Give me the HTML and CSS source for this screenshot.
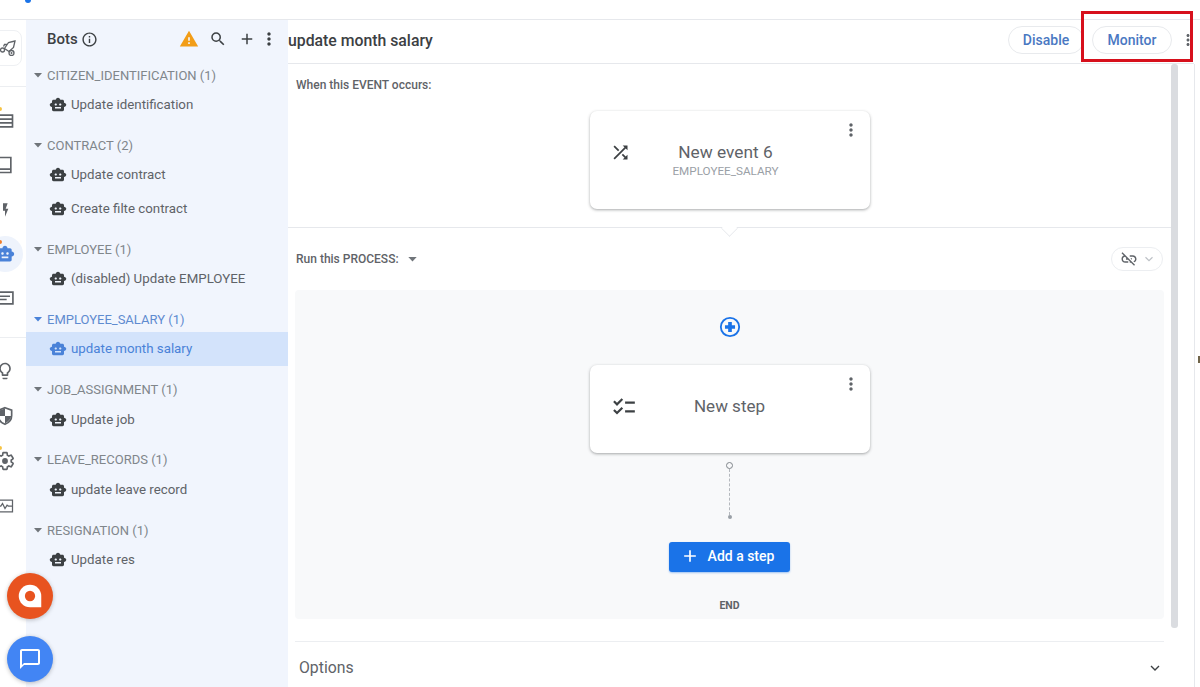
FILE: index.html
```html
<!DOCTYPE html>
<html lang="en">
<head>
<meta charset="utf-8">
<title>Bots</title>
<link rel="stylesheet" href="styles.css">
</head>
<body>
<svg class="defs" width="0" height="0">
  <symbol id="robot" viewBox="0 0 24 24"><path d="M20 9V7c0-1.1-.9-2-2-2h-3c0-1.66-1.34-3-3-3S9 3.34 9 5H6c-1.1 0-2 .9-2 2v2c-1.66 0-3 1.34-3 3s1.34 3 3 3v4c0 1.1.9 2 2 2h12c1.1 0 2-.9 2-2v-4c1.66 0 3-1.34 3-3s-1.34-3-3-3zM7.5 11.5c0-.83.67-1.5 1.5-1.5s1.5.67 1.5 1.5S9.83 13 9 13s-1.5-.67-1.5-1.5zM16 17H8v-2h8v2zm-1-4c-.83 0-1.5-.67-1.5-1.5S14.17 10 15 10s1.5.67 1.5 1.5S15.83 13 15 13z"/></symbol>
  <symbol id="robot-wide" viewBox="0 1 24 21" preserveAspectRatio="none"><path d="M20 9V7c0-1.1-.9-2-2-2h-3c0-1.66-1.34-3-3-3S9 3.34 9 5H6c-1.1 0-2 .9-2 2v2c-1.66 0-3 1.34-3 3s1.34 3 3 3v4c0 1.1.9 2 2 2h12c1.1 0 2-.9 2-2v-4c1.66 0 3-1.34 3-3s-1.34-3-3-3zM7.5 11.5c0-.83.67-1.5 1.5-1.5s1.5.67 1.5 1.5S9.83 13 9 13s-1.5-.67-1.5-1.5zM16 17H8v-2h8v2zm-1-4c-.83 0-1.5-.67-1.5-1.5S14.17 10 15 10s1.5.67 1.5 1.5S15.83 13 15 13z"/></symbol>
  <symbol id="more" viewBox="0 0 24 24"><path d="M12 8c1.1 0 2-.9 2-2s-.9-2-2-2-2 .9-2 2 .9 2 2 2zm0 2c-1.1 0-2 .9-2 2s.9 2 2 2 2-.9 2-2-.9-2-2-2zm0 6c-1.1 0-2 .9-2 2s.9 2 2 2 2-.9 2-2-.9-2-2-2z"/></symbol>
  <symbol id="caret" viewBox="0 0 10 6"><path d="M0 0h10L5 5.5z"/></symbol>
</svg>

<div class="topstrip"><span class="topmark"></span></div>

<div class="app">
  <nav class="rail">
    <div class="rail-logo">
      <svg class="ic-rocket" viewBox="0 0 16 16"><path d="M15 1L8.500 2.500 4.500 8.500 9 11.500 13.500 7.500z" class="ln rk"/><path d="M7 4.500H4.500L3.500 6.500" class="ln rk"/><circle cx="2.500" cy="10" r="2" class="ln rk"/><circle cx="11.500" cy="13" r="2.500" class="ln rk"/><circle cx="11.500" cy="13" r="1"/></svg>
    </div>
    <hr class="rail-rule first">
    <div class="rail-group one">
      <div class="slot"><span class="dot amber"></span><svg viewBox="0 0 24 24" class="ic"><path d="M3 5h18v14H3zM3 9.700h18M3 14.300h18" class="ln"/></svg></div>
      <div class="slot"><svg viewBox="0 0 24 24" class="ic"><path d="M3 3h16v18H3zM3 17h16" class="ln"/></svg></div>
      <div class="slot"><svg viewBox="0 0 24 24" class="ic small"><path d="M9 2v11h3v9l5-12h-4l3-8z"/></svg></div>
      <div class="slot active"><span class="halo"></span><span class="dot orange"></span><svg viewBox="0 0 24 24" class="ic blue"><use href="#robot"/></svg></div>
      <div class="slot"><svg viewBox="0 0 24 24" class="ic"><path d="M2.500 5h19v14h-19z" class="ln"/><path d="M6 9h12v1.800H6zM6 13h8v1.800H6z"/></svg></div>
    </div>
    <hr class="rail-rule second">
    <div class="rail-group two">
      <div class="slot"><svg viewBox="0 0 24 24" class="ic"><path d="M9 21c0 .55.45 1 1 1h4c.55 0 1-.45 1-1v-1H9v1zm3-19C8.140 2 5 5.140 5 9c0 2.380 1.190 4.470 3 5.740V17c0 .55.45 1 1 1h6c.55 0 1-.45 1-1v-2.260c1.810-1.270 3-3.360 3-5.740 0-3.860-3.140-7-7-7zm2.850 11.100l-.85.6V16h-4v-2.300l-.85-.6C7.800 12.160 7 10.630 7 9c0-2.760 2.240-5 5-5s5 2.240 5 5c0 1.630-.8 3.160-2.150 4.100z"/></svg></div>
      <div class="slot"><svg viewBox="0 0 24 24" class="ic"><path d="M12 2l8 3v6.500c0 5-3.300 8.800-8 10.500-4.700-1.700-8-5.500-8-10.500V5z" class="ln"/><path d="M12 3v9H4.500V5.500zM12 12h7.500c-.5 4-3.500 7-7.500 9z"/></svg></div>
      <div class="slot"><span class="dot amber"></span><svg viewBox="0 0 24 24" class="ic"><path class="ln" d="M19.430 12.980c.04-.32.07-.64.07-.98s-.03-.66-.07-.98l2.110-1.650c.19-.15.24-.42.12-.64l-2-3.460c-.12-.22-.39-.3-.61-.22l-2.490 1c-.52-.4-1.080-.73-1.690-.98l-.38-2.650C14.460 2.180 14.250 2 14 2h-4c-.25 0-.46.18-.49.42l-.38 2.650c-.61.25-1.170.59-1.690.98l-2.490-1c-.23-.09-.49 0-.61.22l-2 3.460c-.13.22-.07.49.12.64l2.110 1.650c-.04.32-.07.65-.07.98s.03.66.07.98l-2.110 1.650c-.19.15-.24.42-.12.64l2 3.460c.12.22.39.3.61.22l2.490-1c.52.4 1.080.73 1.690.98l.38 2.650c.03.24.24.42.49.42h4c.25 0 .46-.18.49-.42l.38-2.650c.61-.25 1.170-.59 1.690-.98l2.490 1c.23.09.49 0 .61-.22l2-3.460c.12-.22.07-.49-.12-.64l-2.110-1.650z"/><circle cx="12" cy="12" r="3.500"/></svg></div>
      <div class="slot"><svg viewBox="0 0 24 24" class="ic"><path d="M3 5h18v14H3z" class="ln thin"/><path d="M3 12h4l2-3 3 6 2.500-4 1.500 1h5" class="ln thin"/></svg></div>
    </div>
  </nav>

  <aside class="sidebar">
    <div class="side-head">
      <div class="side-title"><span>Bots</span><svg viewBox="0 0 24 24" class="info"><path d="M11 7h2v2h-2zm0 4h2v6h-2zm1-9C6.480 2 2 6.480 2 12s4.480 10 10 10 10-4.480 10-10S17.520 2 12 2zm0 18c-4.410 0-8-3.590-8-8s3.590-8 8-8 8 3.590 8 8-3.590 8-8 8z"/></svg></div>
      <div class="side-tools">
        <svg viewBox="0 0 24 24" class="warn"><path d="M1 21h22L12 2 1 21zm12-3h-2v-2h2v2zm0-4h-2v-4h2v4z"/></svg>
        <svg viewBox="0 0 24 24" class="tool"><path d="M15.500 14h-.79l-.28-.27A6.471 6.471 0 0 0 16 9.500 6.500 6.500 0 1 0 9.500 16c1.610 0 3.090-.59 4.230-1.570l.27.28v.79l5 4.990L20.490 19l-4.990-5zm-6 0C7.010 14 5 11.990 5 9.500S7.010 5 9.500 5 14 7.010 14 9.500 11.990 14 9.500 14z"/></svg>
        <svg viewBox="0 0 24 24" class="tool"><path d="M19 13h-6v6h-2v-6H5v-2h6V5h2v6h6v2z"/></svg>
        <svg class="tool kebab"><use href="#more"/></svg>
      </div>
    </div>

    <section class="group">
      <h3 class="group-head"><svg class="caret"><use href="#caret"/></svg>CITIZEN_IDENTIFICATION (1)</h3>
      <div class="bot"><svg class="bot-ic"><use href="#robot-wide"/></svg>Update identification</div>
    </section>
    <section class="group">
      <h3 class="group-head"><svg class="caret"><use href="#caret"/></svg>CONTRACT (2)</h3>
      <div class="bot"><svg class="bot-ic"><use href="#robot-wide"/></svg>Update contract</div>
      <div class="bot"><svg class="bot-ic"><use href="#robot-wide"/></svg>Create filte contract</div>
    </section>
    <section class="group">
      <h3 class="group-head"><svg class="caret"><use href="#caret"/></svg>EMPLOYEE (1)</h3>
      <div class="bot"><svg class="bot-ic"><use href="#robot-wide"/></svg>(disabled) Update EMPLOYEE</div>
    </section>
    <section class="group current">
      <h3 class="group-head"><svg class="caret"><use href="#caret"/></svg>EMPLOYEE_SALARY (1)</h3>
      <div class="bot selected"><svg class="bot-ic"><use href="#robot-wide"/></svg>update month salary</div>
    </section>
    <section class="group">
      <h3 class="group-head"><svg class="caret"><use href="#caret"/></svg>JOB_ASSIGNMENT (1)</h3>
      <div class="bot"><svg class="bot-ic"><use href="#robot-wide"/></svg>Update job</div>
    </section>
    <section class="group">
      <h3 class="group-head"><svg class="caret"><use href="#caret"/></svg>LEAVE_RECORDS (1)</h3>
      <div class="bot"><svg class="bot-ic"><use href="#robot-wide"/></svg>update leave record</div>
    </section>
    <section class="group">
      <h3 class="group-head"><svg class="caret"><use href="#caret"/></svg>RESIGNATION (1)</h3>
      <div class="bot"><svg class="bot-ic"><use href="#robot-wide"/></svg>Update res</div>
    </section>
  </aside>

  <main class="main">
    <header class="main-head">
      <h1 class="main-title">update month salary</h1>
      <div class="main-actions">
        <button class="pill disable">Disable</button>
        <button class="pill monitor">Monitor</button>
        <svg class="head-more"><use href="#more"/></svg>
      </div>
    </header>
    <div class="main-body">
      <div class="content">
        <p class="label when">When this EVENT occurs:</p>
        <div class="card event">
          <svg viewBox="0 0 24 24" class="card-ic"><path d="M10.590 9.170L5.410 4 4 5.410l5.170 5.170 1.420-1.410zM14.500 4l2.040 2.040L4 18.590 5.410 20 17.960 7.460 20 9.500V4h-5.500zm.33 9.410l-1.410 1.410 3.130 3.130L14.500 20H20v-5.500l-2.040 2.040-3.130-3.130z"/></svg>
          <div class="card-text">
            <div class="card-title">New event 6</div>
            <div class="card-sub">EMPLOYEE_SALARY</div>
          </div>
          <svg class="card-more"><use href="#more"/></svg>
        </div>
        <div class="split"></div>
        <div class="process-row">
          <span class="label">Run this PROCESS:</span>
          <svg class="process-caret"><use href="#caret"/></svg>
          <div class="link-pill">
            <svg viewBox="0 0 24 24" class="link-ic"><path d="M17 7h-4v1.900h4c1.710 0 3.100 1.390 3.100 3.100 0 1.430-.98 2.630-2.310 2.980l1.460 1.460C20.880 15.610 22 13.950 22 12c0-2.760-2.240-5-5-5zm-1 4h-2.190l2 2H16zM2 4.270l3.110 3.110C3.290 8.120 2 9.910 2 12c0 2.760 2.240 5 5 5h4v-1.900H7c-1.710 0-3.100-1.390-3.100-3.100 0-1.590 1.210-2.900 2.760-3.070L8.730 11H8v2h2.730L13 15.270V17h1.730l4.010 4L20 19.740 3.270 3 2 4.270z"/></svg>
            <svg viewBox="0 0 24 24" class="link-chev"><path d="M6 9l6 6 6-6"/></svg>
          </div>
        </div>
        <div class="panel">
          <svg viewBox="0 0 24 24" class="add-circle"><circle cx="12" cy="12" r="10"/><path d="M12 6.500v11M6.500 12h11"/></svg>
          <div class="card step">
            <svg viewBox="0 0 24 24" class="card-ic check"><path d="M22 7h-9v2h9V7zm0 8h-9v2h9v-2zM5.540 11L2 7.460l1.410-1.410 2.120 2.120 4.240-4.240 1.410 1.410L5.540 11zm0 8L2 15.460l1.410-1.410 2.120 2.120 4.240-4.240 1.410 1.410L5.540 19z"/></svg>
            <div class="card-text"><div class="card-title">New step</div></div>
            <svg class="card-more"><use href="#more"/></svg>
          </div>
          <div class="connector"><span class="ring"></span><span class="dash"></span><span class="end-dot"></span></div>
          <button class="add-step"><svg viewBox="0 0 24 24"><path d="M19 13h-6v6h-2v-6H5v-2h6V5h2v6h6v2z"/></svg>Add a step</button>
          <div class="end">END</div>
        </div>
        <div class="options"><span>Options</span><svg viewBox="0 0 24 24"><path d="M6 9l6 6 6-6"/></svg></div>
      </div>
      <div class="scrollbar"></div>
    </div>
  </main>
</div>

<div class="red-box"></div>
<span class="edge-mark"></span>
<button class="fab orange-fab"><svg viewBox="0 0 32 32"><path d="M16 4a12 12 0 1 0 0 24h12V16A12 12 0 0 0 16 4z" class="fab-shape"/><circle cx="16" cy="16" r="5.500" class="fab-core"/></svg></button>
<button class="fab blue-fab"><svg viewBox="0 0 24 24"><path d="M20 2H4c-1.100 0-2 .9-2 2v18l4-4h14c1.100 0 2-.9 2-2V4c0-1.100-.9-2-2-2zm0 14H6l-2 2V4h16v12z"/></svg></button>
</body>
</html>
```
FILE: styles.css
```css
* { box-sizing: border-box; }
html, body { margin: 0; height: 687px; overflow: hidden; background: #fff; }
body { font-family: Roboto, "Liberation Sans", sans-serif; color: #3c4043; position: relative; }
.defs { display: block; height: 0; }
svg { display: block; flex: none; }

.topstrip { height: 20px; background: #fff; border-bottom: 1px solid #e6e8ec; }
.topmark { display: block; width: 6px; height: 3px; margin-left: 25px; background: #1a73e8; border-radius: 0 0 3px 3px; }

.app { display: grid; grid-template-columns: 26px 262px 1fr; height: 667px; }

/* rail */
.rail { overflow: hidden; background: #fff; }
.rail-logo { width: 36px; height: 36px; margin: 10px 0 0 -14px; border: 1px solid #eef0f3; border-radius: 8px; display: flex; align-items: center; justify-content: flex-end; padding-right: 5px; }
.ic-rocket { width: 16px; height: 16px; fill: #5f6368; }
.ln { fill: none; stroke: #5f6368; stroke-width: 2; }
.ln.thin { stroke-width: 1.500; }
.ln.rk { stroke-width: 1.300; }
.rail-rule { border: 0; border-top: 1px solid #eceef1; margin: 0; }
.rail-rule.first { margin-top: 20px; }
.rail-rule.second { margin-top: 17px; }
.rail-group { padding-top: 12px; }
.rail-group.two { padding-top: 10px; }
.slot { position: relative; height: 44.250px; display: flex; align-items: center; }
.rail-group.two .slot { height: 45px; }
.ic { width: 20px; height: 20px; margin-left: -5px; fill: #5f6368; position: relative; }
.ic.small { width: 16px; height: 16px; margin-left: -3px; }
.ic.blue { fill: #4a82d8; }
.halo { position: absolute; left: -13px; top: 4px; width: 36px; height: 36px; border-radius: 50%; background: #eef3fc; }
.dot { position: absolute; left: -2px; top: 8px; width: 4px; height: 4px; border-radius: 50%; z-index: 1; }
.dot.amber { background: #f6c344; }
.dot.orange { background: #ef7d2a; }

/* sidebar */
.sidebar { background: #f1f5fd; }
.side-head { height: 43px; display: flex; align-items: center; justify-content: space-between; padding: 0 10px 5px 21px; }
.side-title { display: flex; align-items: center; gap: 3px; font-size: 15px; font-weight: 500; color: #3c4043; }
.info { width: 17px; height: 17px; fill: #3c4043; }
.side-tools { display: flex; align-items: center; }
.warn { width: 20px; height: 20px; fill: #f29d17; margin-right: 10px; }
.tool { width: 18px; height: 18px; fill: #3c4043; margin-right: 11px; }
.tool.kebab { width: 20px; height: 20px; margin: 0 -1px 0 -8px; }

.group { margin-bottom: 11.700px; }
.group-head { margin: 0; height: 25px; display: flex; align-items: center; padding-left: 8px; font-size: 13px; font-weight: 400; color: #80868b; }
.caret { width: 8px; height: 5px; margin-right: 5px; fill: #70757a; }
.bot { height: 33.500px; display: flex; align-items: center; padding-left: 23px; font-size: 13.300px; color: #5f6368; }
.bot-ic { width: 18px; height: 15px; margin-right: 4px; fill: #3c4043; }
.current .group-head { color: #5f8bd0; }
.current .caret { fill: #4a82d8; }
.bot.selected { background: #d3e3fb; color: #4a82d8; }
.bot.selected .bot-ic { fill: #4a82d8; }

/* main */
.main { display: flex; flex-direction: column; min-width: 0; }
.main-head { height: 44px; flex: none; display: flex; align-items: center; justify-content: space-between; border-bottom: 1px solid #e6e8ec; margin-right: 6px; padding-bottom: 3px; }
.main-title { margin: 0; font-size: 15.800px; font-weight: 500; color: #3c4043; }
.main-actions { display: flex; align-items: center; }
.pill { height: 28px; border: 1px solid #e8eaed; border-radius: 14px; background: #fff; font: 500 14px Roboto, sans-serif; color: #4a78c2; padding: 0; }
.pill.disable { width: 76px; margin-right: 8px; }
.pill.monitor { width: 80px; }
.head-more { width: 18px; height: 18px; fill: #5f6368; margin: 0 -3px 0 7px; }
.main-body { flex: 1; display: flex; min-height: 0; margin-right: 5px; border-right: 1px solid #e6e8ec; padding-right: 16px; overflow: hidden; }
.content { flex: 1; min-width: 0; padding: 0 7px; }
.scrollbar { width: 7px; height: 564px; flex: none; background: #dadce0; border-radius: 3px; }

.label { font-size: 12px; font-weight: 500; color: #5f6368; margin: 0; line-height: 14px; padding-left: 1px; }
.when { margin-top: 14px; }

.card { position: relative; margin: 0 auto; width: 280px; background: #fff; border-radius: 7px; box-shadow: 0 1px 3px rgba(60,64,67,.45); display: flex; }
.card.event { height: 98px; margin-top: 19px; }
.card.step { height: 88px; margin-top: 27px; }
.card-ic { width: 21px; height: 21px; margin: 31px 0 0 20px; fill: #3c4043; }
.card-ic.check { width: 26px; height: 26px; margin: 29px 0 0 21px; }
.card-text { position: absolute; left: 0; right: 8px; text-align: center; top: 31px; }
.step .card-text { right: 0; }
.card-title { font-size: 17.300px; line-height: 20px; color: #5f6368; }
.step .card-title { font-size: 17px; }
.card-sub { font-size: 11.700px; line-height: 14px; margin-top: 2px; color: #9aa0a6; }
.card-more { position: absolute; right: 9px; top: 9px; width: 20px; height: 20px; fill: #5f6368; }

.split { position: relative; height: 1px; margin: 18px -7px 0; background: #e6e8ec; }
.split::after { content: ""; position: absolute; left: 434px; top: -6px; width: 14px; height: 14px; background: #fff; border-right: 1px solid #e6e8ec; border-bottom: 1px solid #e6e8ec; transform: rotate(45deg) scale(.78); }

.process-row { display: flex; align-items: center; height: 24px; margin-top: 19px; }
.process-caret { width: 9px; height: 5px; margin-left: 9px; fill: #70757a; }
.link-pill { margin-left: auto; width: 52px; height: 24px; border: 1px solid #eceef1; border-radius: 12px; display: flex; align-items: center; padding-left: 8px; margin-right: 1px; }
.link-ic { width: 18px; height: 18px; fill: #5f6368; }
.link-chev { width: 14px; height: 14px; margin-left: 4px; fill: none; stroke: #bdc1c6; stroke-width: 2; }

.panel { margin-top: 19px; height: 329px; background: #f8f9fa; border-radius: 4px; padding-top: 26px; display: flex; flex-direction: column; align-items: center; }
.add-circle { width: 22px; height: 22px; fill: none; stroke: #1a73e8; stroke-width: 2; }
.add-circle path { stroke-width: 4; }
.connector { display: flex; flex-direction: column; align-items: center; margin-top: 9px; height: 57px; }
.ring { width: 7px; height: 7px; border: 1px solid #80868b; border-radius: 50%; flex: none; }
.dash { flex: 1; width: 0; border-left: 1px dashed #b4b8bd; }
.end-dot { width: 4px; height: 4px; border-radius: 50%; background: #9aa0a6; flex: none; }
.add-step { margin-top: 23px; width: 121px; height: 30px; flex: none; border: 0; border-radius: 3px; background: #1a73e8; color: #fff; font: 500 14px Roboto, sans-serif; display: flex; align-items: center; justify-content: center; gap: 8px; padding: 0 5px 2px 0; box-shadow: 0 1px 2px rgba(26,115,232,.4); }
.add-step svg { width: 20px; height: 20px; fill: #fff; }
.end { margin-top: 27px; font-size: 10.500px; font-weight: 700; color: #5f6368; line-height: 14px; }

.options { margin-top: 22px; border-top: 1px solid #eceef1; height: 52px; display: flex; align-items: center; justify-content: space-between; padding: 0 1px 0 4px; font-size: 15.800px; color: #5f6368; }
.options svg { width: 16px; height: 16px; fill: none; stroke: #3c4043; stroke-width: 2; }

/* overlays */
.red-box { position: absolute; left: 1081px; top: 11px; width: 112px; height: 51px; border: 3px solid #d7101c; }
.edge-mark { position: absolute; left: 1198px; top: 356px; width: 2px; height: 7px; background: #70654a; }
.fab { position: absolute; left: 7px; width: 46px; height: 46px; border: 0; padding: 0; border-radius: 50%; display: flex; align-items: center; justify-content: center; box-shadow: 0 1px 4px rgba(0,0,0,.25); }
.orange-fab { top: 573px; background: #e8531f; }
.orange-fab svg { width: 30px; height: 30px; }
.fab-shape { fill: #fff; }
.fab-core { fill: #e8531f; }
.blue-fab { top: 636px; background: #4285f4; }
.blue-fab svg { width: 24px; height: 24px; fill: #fff; }
```
